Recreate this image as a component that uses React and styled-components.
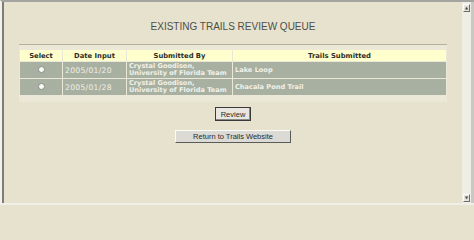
import React from 'react';
import styled, { createGlobalStyle } from 'styled-components';

const GlobalStyle = createGlobalStyle`
    html, body {
        margin: 0;
        padding: 0;
        background: #e6e2ce;
    }
`;

const Window = styled.div`
    width: 474px;
    height: 205px;
    box-sizing: border-box;
    display: flex;
    border-top: 2px solid #a4a4a0;
    border-left: 2px solid #f2f0e8;
    border-bottom: 2px solid #efeee8;
    background: #e6e2ce;
    overflow: hidden;
`;

const Page = styled.div`
    flex: 1;
    border-left: 2px solid #7c7c78;
    padding-top: 19px;
    display: flex;
    flex-direction: column;
    align-items: center;
`;

const Title = styled.h1`
    margin: 0;
    font-family: "Liberation Sans", Arial, sans-serif;
    font-weight: normal;
    font-size: 10px;
    line-height: 12px;
    color: #4f4e4a;
`;

const TableBox = styled.div`
    margin-top: 11px;
    width: 427px;
    border-top: 1px solid #b4b09e;
    background: #ebe8d8;
    padding: 5px 0 7px 1px;
`;

const Table = styled.table`
    border-collapse: separate;
    border-spacing: 1px;
    margin: -1px;
    width: 428px;
    table-layout: fixed;
    font-family: "DejaVu Sans", Verdana, sans-serif;
    font-size: 6.8px;
    font-weight: bold;
`;

const Th = styled.th`
    background: #ffffcd;
    color: #2e2e2a;
    height: 11px;
    padding: 0;
    text-align: center;
    width: ${p => p.w}px;
`;

const Td = styled.td`
    background: #a8b0a1;
    color: #f1f1e8;
    height: 16px;
    padding: 0 0 0 ${p => (p.center ? 0 : 2)}px;
    text-align: ${p => (p.center ? 'center' : 'left')};
    line-height: 7px;
    font-weight: ${p => (p.light ? 'normal' : 'bold')};
    font-size: ${p => (p.light ? '7.6px' : '6.6px')};
    letter-spacing: ${p => (p.light ? '0.3px' : '0')};
`;

const Radio = styled.span`
    display: inline-block;
    width: 5px;
    height: 5px;
    border-radius: 50%;
    background: #fafaf6;
    border: 1px solid #8a8f86;
    vertical-align: middle;
`;

const Button = styled.button`
    font-family: "Liberation Sans", Arial, sans-serif;
    font-size: 7.5px;
    color: #2a2a2a;
    padding: 0;
    margin-top: ${p => p.top}px;
    width: ${p => p.w}px;
    height: ${p => p.h}px;
    background: ${p => (p.primary ? '#e8e6de' : '#dcdad4')};
    border: 1px solid;
    border-color: ${p => (p.primary ? '#3a3a3a' : '#fbfbf8 #5a5a58 #5a5a58 #fbfbf8')};
    box-shadow: ${p => (p.primary ? 'inset -1px -1px 0 #8a8a86' : 'none')};
`;

const Scrollbar = styled.div`
    width: 12px;
    box-sizing: border-box;
    display: flex;
    flex-direction: column;
    justify-content: space-between;
    background: #eeede6;
    border-right: 3px solid #c9c8c2;
    padding: 2px 0 1px 1px;
`;

const Arrow = styled.div`
    width: 7px;
    height: 8px;
    box-sizing: border-box;
    background: #e6e4dc;
    border: 1px solid;
    border-color: #fdfdfb #6c6c68 #6c6c68 #fdfdfb;
    font-size: 4px;
    line-height: 6px;
    text-align: center;
    color: #444;
    font-family: "DejaVu Sans", sans-serif;
`;

const rows = [
    { date: '2005/01/20', trail: 'Lake Loop' },
    { date: '2005/01/28', trail: 'Chacala Pond Trail' },
];

function App() {
    return (
        <Window>
            <GlobalStyle />
            <Page>
                <Title>EXISTING TRAILS REVIEW QUEUE</Title>
                <TableBox>
                    <Table>
                        <thead>
                            <tr>
                                <Th w={42}>Select</Th>
                                <Th w={63}>Date Input</Th>
                                <Th w={105}>Submitted By</Th>
                                <Th>Trails Submitted</Th>
                            </tr>
                        </thead>
                        <tbody>
                            {rows.map(r => (
                                <tr key={r.date}>
                                    <Td center><Radio /></Td>
                                    <Td light>{r.date}</Td>
                                    <Td>Crystal Goodison,<br />University of Florida Team</Td>
                                    <Td>{r.trail}</Td>
                                </tr>
                            ))}
                        </tbody>
                    </Table>
                </TableBox>
                <Button primary top={5} w={36} h={14}>Review</Button>
                <Button top={9} w={116} h={13}>Return to Trails Website</Button>
            </Page>
            <Scrollbar>
                <Arrow>▲</Arrow>
                <Arrow>▼</Arrow>
            </Scrollbar>
        </Window>
    );
}

export default App;
